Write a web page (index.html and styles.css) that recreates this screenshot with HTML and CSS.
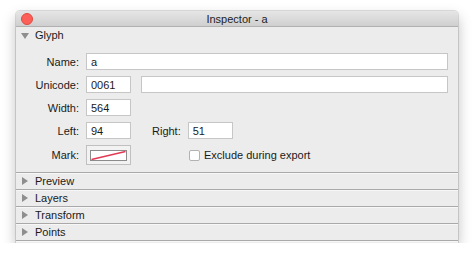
FILE: index.html
```html
<!doctype html>
<html>
  <head>
    <title>Inspector - a</title>
    <link rel="stylesheet" href="styles.css">
  </head>
  <body>
    <div class="window">
      <div class="titlebar">
        <span class="close"></span>
        <span class="title">Inspector - a</span>
      </div>
      <div class="section open">
        <div class="section-head"><span class="tri down"></span>Glyph</div>
        <div class="glyph-form">
          <div class="row">
            <label>Name:</label>
            <input class="field wide" type="text" value="a">
          </div>
          <div class="row">
            <label>Unicode:</label>
            <input class="field short" type="text" value="0061">
            <input class="field wide gap" type="text" value="">
          </div>
          <div class="row">
            <label>Width:</label>
            <input class="field short" type="text" value="564">
          </div>
          <div class="row">
            <label>Left:</label>
            <input class="field short" type="text" value="94">
            <label class="right-label">Right:</label>
            <input class="field short" type="text" value="51">
          </div>
          <div class="row mark-row">
            <label>Mark:</label>
            <button type="button" class="mark-btn">
              <svg width="37" height="11" viewBox="0 0 37 11">
                <rect x="0.5" y="0.5" width="36" height="10" fill="#fff" stroke="#8c8c8c"/>
                <line x1="1.5" y1="9.5" x2="35.5" y2="1.5" stroke="#e23a55" stroke-width="1.4"/>
              </svg>
            </button>
            <span class="check"><span class="box"></span>Exclude during export</span>
          </div>
        </div>
      </div>
      <div class="section"><div class="section-head"><span class="tri"></span>Preview</div></div>
      <div class="section"><div class="section-head"><span class="tri"></span>Layers</div></div>
      <div class="section"><div class="section-head"><span class="tri"></span>Transform</div></div>
      <div class="section"><div class="section-head"><span class="tri"></span>Points</div></div>
    </div>
  </body>
</html>
```
FILE: styles.css
```css
body {
  margin: 0;
  background: #fff;
  padding: 11px 16px 0 16px;
  font-family: "Liberation Sans", Arial, sans-serif;
  font-size: 11px;
  color: #1a1a1a;
}
.window {
  width: 442px;
  height: 232px;
  background: #ececec;
  border-radius: 4px 4px 0 0;
  box-shadow: 0 0 0 1px rgba(0, 0, 0, 0.12), 0 6px 14px rgba(0, 0, 0, 0.26);
  overflow: hidden;
}
.titlebar {
  position: relative;
  height: 15px;
  background: linear-gradient(#e6e6e6, #cfcfcf);
  border-bottom: 1px solid #b0b0b0;
  text-align: center;
  line-height: 16px;
  color: #222;
}
.close {
  position: absolute;
  left: 5px;
  top: 2px;
  width: 10px;
  height: 10px;
  border-radius: 50%;
  background: #fc5f57;
  border: 0.5px solid #de4a42;
}
.section {
  border-bottom: 1px solid #a9a9a9;
  box-shadow: 0 1px 0 #f7f7f7;
}
.section-head {
  height: 16px;
  line-height: 16px;
  display: flex;
  align-items: center;
  padding-left: 5px;
}
.tri {
  width: 0;
  height: 0;
  border-top: 4px solid transparent;
  border-bottom: 4px solid transparent;
  border-left: 6px solid #8e8e8e;
  margin: 0 7px 0 1px;
}
.tri.down {
  border-left: 4px solid transparent;
  border-right: 4px solid transparent;
  border-top: 6px solid #8e8e8e;
  border-bottom: 0;
  margin: 1px 6px 0 0;
}
.glyph-form {
  padding: 10px 10px 7px 0;
}
.row {
  display: flex;
  align-items: center;
  height: 17px;
  margin-bottom: 6px;
}
.row label {
  width: 63px;
  text-align: right;
  margin-right: 7px;
}
.field {
  box-sizing: border-box;
  height: 17px;
  border: 1px solid #c6c6c6;
  background: #fff;
  font: inherit;
  color: #1a1a1a;
  padding: 1px 0 0 4px;
  margin: 0;
  outline: none;
}
.field.wide {
  flex: 1;
  min-width: 0;
}
.field.short {
  width: 45px;
}
.field.gap {
  margin-left: 10px;
}
.row label.right-label {
  width: auto;
  margin-left: 21px;
}
.mark-row {
  height: 20px;
  margin-bottom: 0;
}
.mark-btn {
  box-sizing: border-box;
  width: 45px;
  height: 20px;
  border: 1px solid #c0c0c0;
  background: #f2f2f2;
  padding: 0;
  display: flex;
  align-items: center;
  justify-content: center;
}
.mark-btn svg {
  display: block;
}
.check {
  display: flex;
  align-items: center;
  margin-left: 58px;
}
.box {
  box-sizing: border-box;
  width: 11px;
  height: 11px;
  border: 1px solid #b2b2b2;
  border-radius: 2px;
  background: #fff;
  margin-right: 4px;
}
```
